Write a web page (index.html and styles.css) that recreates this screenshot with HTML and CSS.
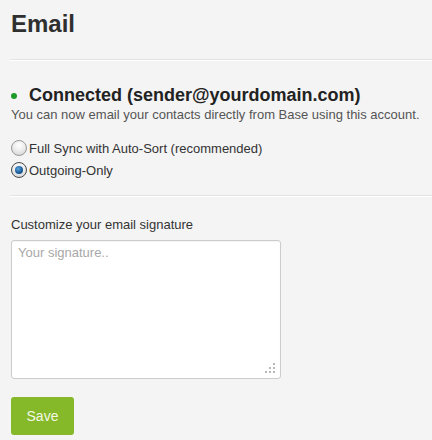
FILE: index.html
```html
<!DOCTYPE html>
<html>
<head>
<meta charset="utf-8">
<link rel="stylesheet" href="styles.css">
</head>
<body>
<div class="page">
  <h1 class="title">Email</h1>
  <div class="divider"></div>
  <section class="status">
    <div class="status-line"><span class="dot"></span><span class="status-text">Connected (sender@yourdomain.com)</span></div>
    <p class="status-sub">You can now email your contacts directly from Base using this account.</p>
    <label class="radio-row first"><input type="radio" name="sync" class="radio"><span>Full Sync with Auto-Sort (recommended)</span></label>
    <label class="radio-row"><input type="radio" name="sync" class="radio" checked><span>Outgoing-Only</span></label>
  </section>
  <div class="divider second"></div>
  <section class="signature">
    <label class="sig-label">Customize your email signature</label>
    <div class="sig-box">
      <textarea class="sig-input" placeholder="Your signature.."></textarea>
      <svg class="grip" width="12" height="12" viewBox="0 0 12 12"><g fill="#b8b8b8"><rect x="9" y="1" width="2" height="2"/><rect x="5" y="5" width="2" height="2"/><rect x="9" y="5" width="2" height="2"/><rect x="1" y="9" width="2" height="2"/><rect x="5" y="9" width="2" height="2"/><rect x="9" y="9" width="2" height="2"/></g></svg>
    </div>
    <button class="save">Save</button>
  </section>
</div>
</body>
</html>
```
FILE: styles.css
```css
html, body {
  margin: 0;
  padding: 0;
  background: #f4f4f4;
}
body {
  font-family: "Liberation Sans", Arial, sans-serif;
  color: #333;
  width: 432px;
  height: 440px;
  overflow: hidden;
}
.page {
  padding-left: 10px;
}
.title {
  margin: 10px 0 0 1px;
  font-size: 24px;
  line-height: 28px;
  font-weight: bold;
  color: #2f2f2f;
}
.divider {
  margin-top: 21px;
  height: 0;
  border-top: 1px solid #e3e3e3;
  border-bottom: 1px solid #ffffff;
}
.divider.second {
  margin-top: 14px;
}
.status {
  padding-top: 23px;
}
.status-line {
  display: flex;
  align-items: center;
  height: 22px;
}
.dot {
  width: 6px;
  height: 6px;
  border-radius: 50%;
  background: #1f9a2c;
  margin-left: 1px;
  margin-right: 12px;
  margin-top: 2px;
}
.status-text {
  font-size: 18px;
  font-weight: bold;
  color: #222;
  line-height: 22px;
}
.status-sub {
  margin: 1px 0 0 1px;
  font-size: 13px;
  line-height: 16px;
  color: #555;
}
.radio-row {
  display: flex;
  align-items: center;
  height: 22px;
  font-size: 13px;
  color: #333;
}
.radio-row.first {
  margin-top: 14px;
}
.radio {
  -webkit-appearance: none;
  appearance: none;
  width: 16px;
  height: 16px;
  margin: 0 2px 0 1px;
  border-radius: 50%;
  border: 1px solid #999;
  background: radial-gradient(circle at 50% 30%, #ffffff 0%, #ebebeb 50%, #cdcdcd 100%);
  box-sizing: border-box;
  position: relative;
}
.radio:checked {
  border-color: #4a4a4a;
}
.radio:checked::after {
  content: "";
  position: absolute;
  left: 3px;
  top: 3px;
  width: 8px;
  height: 8px;
  border-radius: 50%;
  background: radial-gradient(circle at 40% 35%, #5fa6dc 0%, #1c5f9c 55%, #0b365f 100%);
}
.signature {
  padding-top: 20px;
  padding-left: 1px;
}
.sig-label {
  display: block;
  font-size: 13px;
  line-height: 16px;
  color: #333;
}
.sig-box {
  position: relative;
  margin-top: 7px;
  width: 270px;
  height: 139px;
}
.sig-input {
  display: block;
  width: 270px;
  height: 139px;
  box-sizing: border-box;
  border: 1px solid #cccccc;
  border-radius: 3px;
  background: #fff;
  padding: 4px 6px;
  font-family: "Liberation Sans", Arial, sans-serif;
  font-size: 13px;
  line-height: 16px;
  resize: none;
  outline: none;
  box-shadow: inset 0 1px 1px rgba(0,0,0,0.04);
}
.sig-input::placeholder {
  color: #a8a8a8;
}
.grip {
  position: absolute;
  right: 5px;
  bottom: 5px;
}
.save {
  display: block;
  margin-top: 18px;
  width: 63px;
  height: 38px;
  border: none;
  border-radius: 3px;
  background: #86b929;
  color: #f2f8e4;
  font-family: "Liberation Sans", Arial, sans-serif;
  font-size: 14px;
  padding: 0;
}
```
